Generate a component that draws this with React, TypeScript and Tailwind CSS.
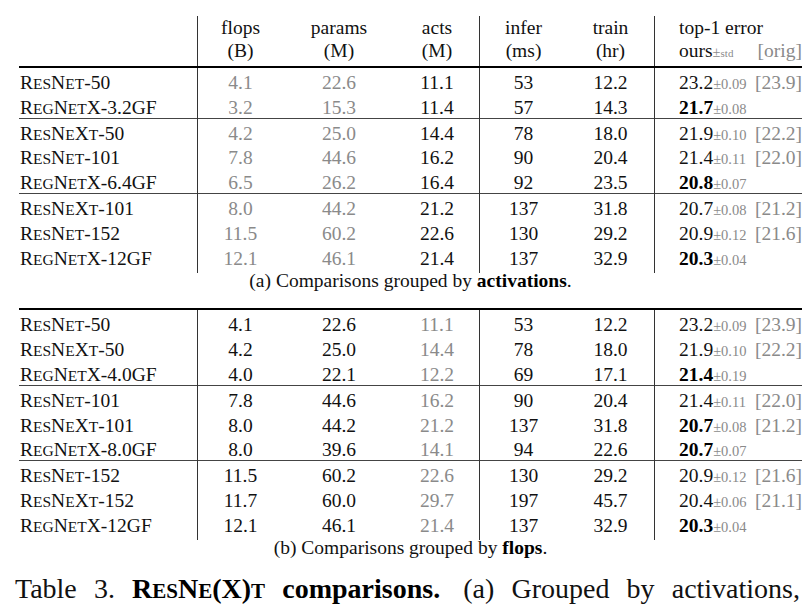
type Row = {
  name: string;
  v: string[];
  err: string;
  std: string;
  orig?: string;
  bold?: boolean;
};

// 1px columns are the vertical rules of the table
const GRID = 'grid grid-cols-[178px_1px_85px_112px_84px_1px_87px_87px_1px_147px]';

const tableA: Row[][] = [
  [
    { name: 'ResNet-50', v: ['4.1', '22.6', '11.1', '53', '12.2'], err: '23.2', std: '0.09', orig: '23.9' },
    { name: 'RegNetX-3.2GF', v: ['3.2', '15.3', '11.4', '57', '14.3'], err: '21.7', std: '0.08', bold: true },
  ],
  [
    { name: 'ResNeXt-50', v: ['4.2', '25.0', '14.4', '78', '18.0'], err: '21.9', std: '0.10', orig: '22.2' },
    { name: 'ResNet-101', v: ['7.8', '44.6', '16.2', '90', '20.4'], err: '21.4', std: '0.11', orig: '22.0' },
    { name: 'RegNetX-6.4GF', v: ['6.5', '26.2', '16.4', '92', '23.5'], err: '20.8', std: '0.07', bold: true },
  ],
  [
    { name: 'ResNeXt-101', v: ['8.0', '44.2', '21.2', '137', '31.8'], err: '20.7', std: '0.08', orig: '21.2' },
    { name: 'ResNet-152', v: ['11.5', '60.2', '22.6', '130', '29.2'], err: '20.9', std: '0.12', orig: '21.6' },
    { name: 'RegNetX-12GF', v: ['12.1', '46.1', '21.4', '137', '32.9'], err: '20.3', std: '0.04', bold: true },
  ],
];

const tableB: Row[][] = [
  [
    { name: 'ResNet-50', v: ['4.1', '22.6', '11.1', '53', '12.2'], err: '23.2', std: '0.09', orig: '23.9' },
    { name: 'ResNeXt-50', v: ['4.2', '25.0', '14.4', '78', '18.0'], err: '21.9', std: '0.10', orig: '22.2' },
    { name: 'RegNetX-4.0GF', v: ['4.0', '22.1', '12.2', '69', '17.1'], err: '21.4', std: '0.19', bold: true },
  ],
  [
    { name: 'ResNet-101', v: ['7.8', '44.6', '16.2', '90', '20.4'], err: '21.4', std: '0.11', orig: '22.0' },
    { name: 'ResNeXt-101', v: ['8.0', '44.2', '21.2', '137', '31.8'], err: '20.7', std: '0.08', orig: '21.2', bold: true },
    { name: 'RegNetX-8.0GF', v: ['8.0', '39.6', '14.1', '94', '22.6'], err: '20.7', std: '0.07', bold: true },
  ],
  [
    { name: 'ResNet-152', v: ['11.5', '60.2', '22.6', '130', '29.2'], err: '20.9', std: '0.12', orig: '21.6' },
    { name: 'ResNeXt-152', v: ['11.7', '60.0', '29.7', '197', '45.7'], err: '20.4', std: '0.06', orig: '21.1' },
    { name: 'RegNetX-12GF', v: ['12.1', '46.1', '21.4', '137', '32.9'], err: '20.3', std: '0.04', bold: true },
  ],
];

// small caps by hand: lowercase runs are upper-cased at a smaller size
const Caps = ({ text, small }: { text: string; small: string }) => {
  const parts = text.match(/[a-z]+|[^a-z]+/g) ?? [];
  return (
    <>
      {parts.map((p, i) =>
        /[a-z]/.test(p) ? (
          <span key={i} className={small}>
            {p.toUpperCase()}
          </span>
        ) : (
          <span key={i}>{p}</span>
        ),
      )}
    </>
  );
};

const Rule = () => <div className="bg-[#333]" />;

// gray = indexes of the value columns that are greyed out
const DataRow = ({ row, gray }: { row: Row; gray: number[] }) => {
  const cell = (i: number) =>
    gray.includes(i)
      ? 'flex items-center justify-center text-[#8a8a8a]'
      : 'flex items-center justify-center text-[#111]';
  return (
    <div className={`${GRID} h-[24.8px]`}>
      <div className="flex items-center pl-px text-[#111] whitespace-nowrap">
        <span>
          <Caps text={row.name} small="text-[15.5px]" />
        </span>
      </div>
      <Rule />
      <div className={cell(0)}>{row.v[0]}</div>
      <div className={cell(1)}>{row.v[1]}</div>
      <div className={cell(2)}>{row.v[2]}</div>
      <Rule />
      <div className={cell(3)}>{row.v[3]}</div>
      <div className={cell(4)}>{row.v[4]}</div>
      <Rule />
      <div className="flex items-center pl-[24px]">
        <div className="flex items-baseline w-full">
          {row.bold ? <b className="text-black">{row.err}</b> : <span className="text-[#111]">{row.err}</span>}
          <span className="text-[#8a8a8a] text-[14.5px]">±{row.std}</span>
          {row.orig && <span className="text-[#8a8a8a] ml-auto">[{row.orig}]</span>}
        </div>
      </div>
    </div>
  );
};

const HeadCell = ({ top, bottom }: { top: string; bottom: string }) => (
  <div>
    <div className="h-[23px] flex items-center justify-center">{top}</div>
    <div className="h-[23px] flex items-center justify-center">{bottom}</div>
  </div>
);

const Header = () => (
  <div className={`${GRID} h-[66px] pt-[16px] text-[#111]`}>
    <div />
    <Rule />
    <HeadCell top="flops" bottom="(B)" />
    <HeadCell top="params" bottom="(M)" />
    <HeadCell top="acts" bottom="(M)" />
    <Rule />
    <HeadCell top="infer" bottom="(ms)" />
    <HeadCell top="train" bottom="(hr)" />
    <Rule />
    <div className="pl-[24px]">
      <div className="h-[23px] flex items-center">top-1 error</div>
      <div className="h-[23px] flex items-center">
        <div className="flex items-baseline w-full">
          <span>ours</span>
          <span className="text-[#8a8a8a] text-[14.5px]">±</span>
          <span className="text-[#8a8a8a] text-[11px]">std</span>
          <span className="text-[#8a8a8a] ml-auto">[orig]</span>
        </div>
      </div>
    </div>
  </div>
);

const Table = ({ groups, gray, header }: { groups: Row[][]; gray: number[]; header?: boolean }) => (
  <div>
    {header && <Header />}
    <div className="h-[2px] bg-black" />
    {groups.map((g, gi) => (
      <div key={gi}>
        {gi > 0 && <div className="h-px bg-[#444]" />}
        {g.map((r) => (
          <DataRow key={r.name} row={r} gray={gray} />
        ))}
      </div>
    ))}
  </div>
);

export default function App() {
  return (
    <div className="w-[812px] h-[613px] overflow-hidden bg-white pl-[19px] font-[Liberation_Serif,serif] text-[19.5px]">
      <div className="w-[783px]">
        <Table groups={tableA} gray={[0, 1]} header />
        <div className="h-[24px] flex items-center justify-center text-[#111]">
          <span>
            (a) Comparisons grouped by <b className="text-black">activations</b>.
          </span>
        </div>
        <div className="h-[16px]" />
        <Table groups={tableB} gray={[2]} />
        <div className="h-[24px] flex items-center justify-center text-[#111]">
          <span>
            (b) Comparisons grouped by <b className="text-black">flops</b>.
          </span>
        </div>
      </div>
      <div className="mt-[12px] -ml-[4px] w-[785px] h-[34px] flex items-center justify-between whitespace-nowrap text-[28px] text-[#111]">
        <span>Table</span>
        <span>3.</span>
        <b className="text-black">
          <Caps text="ResNe(X)t" small="text-[21px]" />
        </b>
        <b className="text-black">comparisons.</b>
        <span className="ml-[6px]">(a)</span>
        <span>Grouped</span>
        <span>by</span>
        <span>activations,</span>
      </div>
    </div>
  );
}
